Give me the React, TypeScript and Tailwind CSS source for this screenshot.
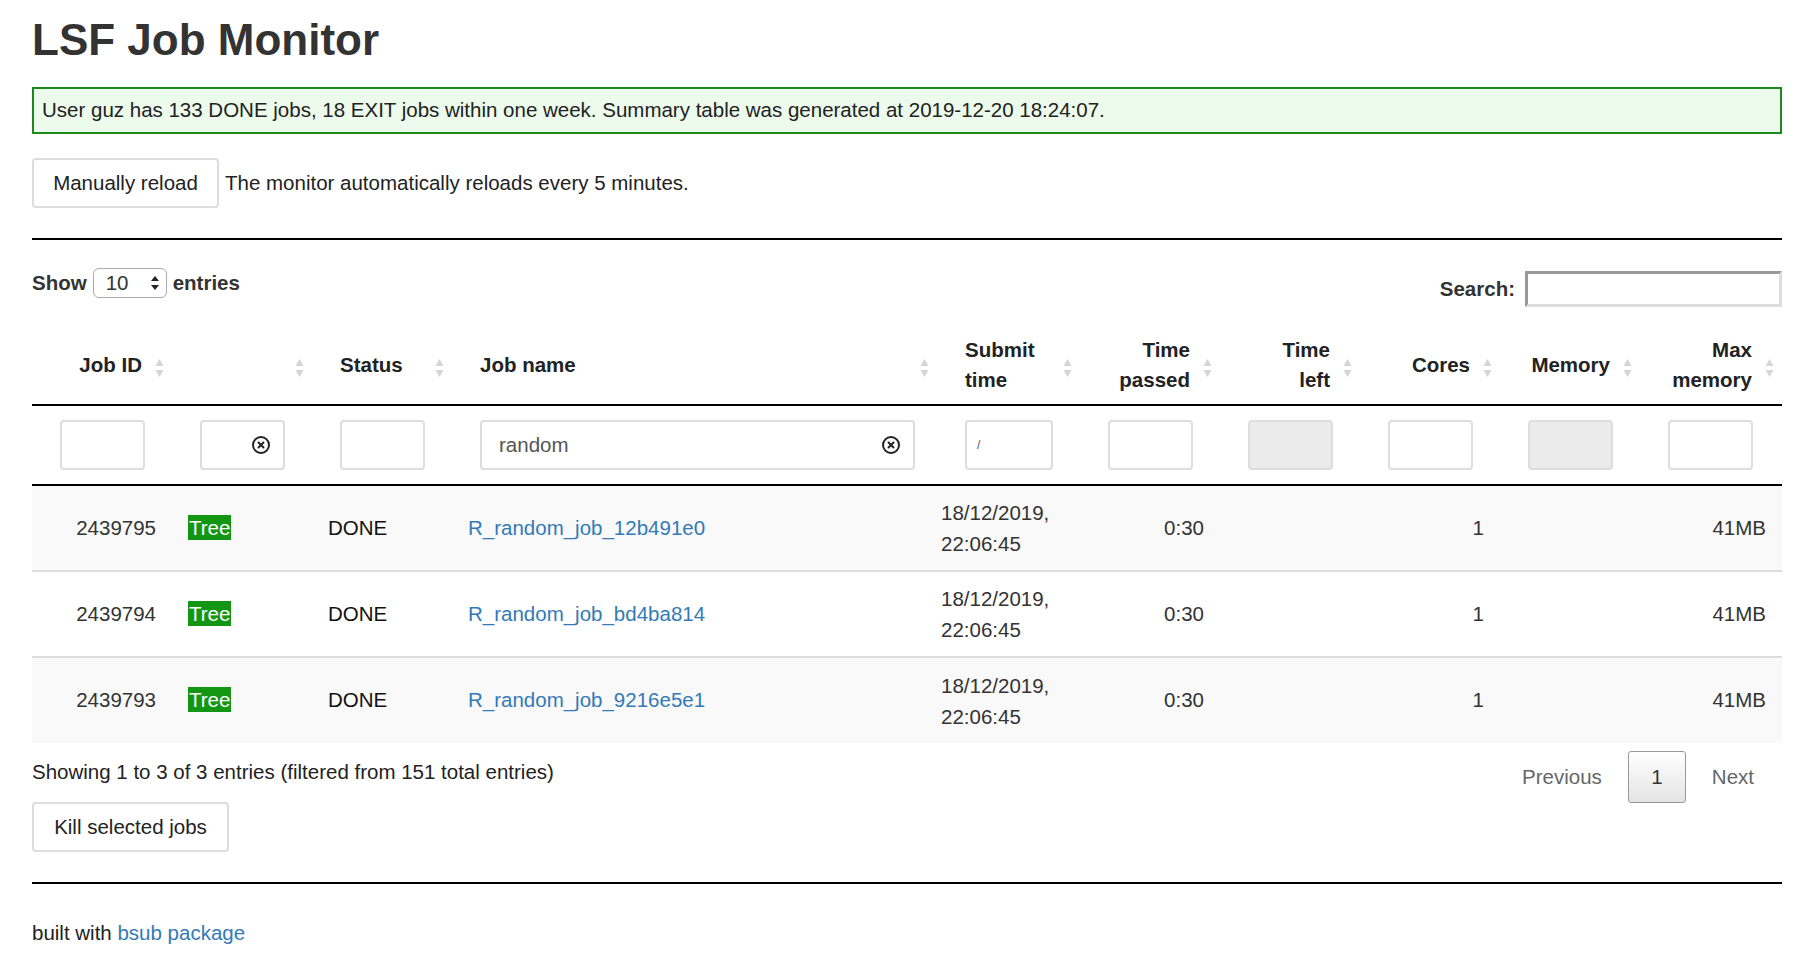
import React from "react";

const cols = [
  { label: ["Job ID"], w: 140, align: "right" },
  { label: [""], w: 140, align: "left" },
  { label: ["Status"], w: 140, align: "left" },
  { label: ["Job name"], w: 485, align: "left" },
  { label: ["Submit", "time"], w: 143, align: "left" },
  { label: ["Time", "passed"], w: 140, align: "right" },
  { label: ["Time", "left"], w: 140, align: "right" },
  { label: ["Cores"], w: 140, align: "right" },
  { label: ["Memory"], w: 140, align: "right" },
  { label: ["Max", "memory"], w: 142, align: "right" },
];

const rows = [
  ["2439795", "R_random_job_12b491e0"],
  ["2439794", "R_random_job_bd4ba814"],
  ["2439793", "R_random_job_9216e5e1"],
];

function Arrows() {
  return (
    <svg width="9" height="20" viewBox="0 0 9 20" className="absolute right-[8px] top-1/2 -translate-y-1/2">
      <path d="M4.5 1 L8.5 8 L0.5 8 Z" fill="#d6d6d6" />
      <path d="M4.5 19 L8.5 12 L0.5 12 Z" fill="#d6d6d6" />
    </svg>
  );
}

function ClearIcon() {
  return (
    <svg width="20" height="20" viewBox="0 0 20 20" className="absolute right-[12px] top-1/2 -translate-y-1/2">
      <circle cx="10" cy="10" r="8" fill="none" stroke="#222" strokeWidth="2" />
      <path d="M7 7 L13 13 M13 7 L7 13" stroke="#222" strokeWidth="2" />
    </svg>
  );
}

export default function App() {
  return (
    <div className="px-[32px] text-[20.5px] text-[#333] bg-white" style={{ fontFamily: '"Liberation Sans", Arial, sans-serif' }}>
      <h1 className="text-[44px] font-bold pt-[12px] h-[87px] leading-[56px] text-[#333]">LSF Job Monitor</h1>
      <div className="border-2 border-[#1a8a1a] bg-[#ecfbec] h-[47px] flex items-center px-[8px] text-[#222]">
        User guz has 133 DONE jobs, 18 EXIT jobs within one week. Summary table was generated at 2019-12-20 18:24:07.
      </div>
      <div className="flex items-center mt-[24px] gap-[6px]">
        <button className="h-[50px] w-[187px] border-2 border-[#ddd] rounded-[4px] bg-white text-[#222]">Manually reload</button>
        <span className="text-[#222]">The monitor automatically reloads every 5 minutes.</span>
      </div>
      <div className="h-[2px] bg-black mt-[30px]" />
      <div className="flex justify-between items-start mt-[31px] h-[60px]">
        <div className="flex items-center font-bold gap-[6px] mt-[-3px]">
          Show
          <span className="inline-flex items-center border border-[#aaa] rounded-[6px] h-[30px] w-[74px] pl-[12px] pr-[6px] justify-between font-normal bg-white">
            10
            <svg width="10" height="16" viewBox="0 0 10 16"><path d="M5 1 L9 6 L1 6 Z M5 15 L9 10 L1 10 Z" fill="#222" /></svg>
          </span>
          entries
        </div>
        <div className="flex items-center gap-[10px] font-bold">
          Search:
          <div className="w-[257px] h-[36px] border-[3px] border-[#ddd] border-t-[#999] border-l-[#999] bg-white" />
        </div>
      </div>
      <table className="border-collapse table-fixed w-full">
        <colgroup>
          {cols.map((c, i) => <col key={i} style={{ width: c.w }} />)}
        </colgroup>
        <thead>
          <tr className="h-[74px] border-b-2 border-black">
            {cols.map((c, i) => (
              <th key={i} className={`relative font-bold text-[#222] leading-[30px] align-top pt-[4px] ${c.label.length === 1 ? "pt-[19px]" : ""} ${c.align === "right" ? "text-right pr-[30px]" : "text-left pl-[28px]"}`}>
                {c.label.map((l, j) => <div key={j}>{l}</div>)}
                <Arrows />
              </th>
            ))}
          </tr>
          <tr className="h-[80px] border-b-2 border-black">
            {cols.map((c, i) => {
              const disabled = i === 6 || i === 8;
              const w = i === 3 ? "w-[435px]" : i === 4 ? "w-[88px]" : "w-[85px]";
              return (
                <th key={i} className="pl-[28px] text-left font-normal">
                  <div className={`relative h-[50px] ${w} border-2 border-[#ddd] rounded-[4px] ${disabled ? "bg-[#ebebeb]" : "bg-white"} flex items-center`}>
                    {i === 3 && <span className="pl-[17px] text-[#555]">random</span>}
                    {i === 4 && <span className="pl-[10px] text-[#555] text-[12px]">/</span>}
                    {(i === 1 || i === 3) && <ClearIcon />}
                  </div>
                </th>
              );
            })}
          </tr>
        </thead>
        <tbody>
          {rows.map((r, k) => (
            <tr key={k} className={`h-[86px] ${k < 2 ? "border-b-2 border-[#ddd]" : ""} ${k % 2 === 0 ? "bg-[#f9f9f9]" : "bg-white"}`}>
              <td className="text-right pr-[16px]">{r[0]}</td>
              <td className="pl-[16px]"><span className="bg-[#139613] text-white px-[1px] py-[1px]">Tree</span></td>
              <td className="pl-[16px] text-[#111]">DONE</td>
              <td className="pl-[16px] text-[#337ab7]">{r[1]}</td>
              <td className="pl-[4px] leading-[31px]">18/12/2019,<br />22:06:45</td>
              <td className="text-right pr-[16px]">0:30</td>
              <td></td>
              <td className="text-right pr-[16px]">1</td>
              <td></td>
              <td className="text-right pr-[16px]">41MB</td>
            </tr>
          ))}
        </tbody>
      </table>
      <div className="flex justify-between items-start mt-[8px]">
        <div className="flex flex-col items-start">
          <div className="h-[44px] mt-[-1px] flex items-center text-[#222]">Showing 1 to 3 of 3 entries (filtered from 151 total entries)</div>
          <button className="h-[50px] w-[197px] border-2 border-[#ddd] rounded-[4px] bg-white text-[#222] mt-[8px]">Kill selected jobs</button>
        </div>
        <div className="flex items-center text-[#666] mr-[10px]">
          <span className="px-[18px]">Previous</span>
          <span className="h-[52px] w-[58px] flex items-center justify-center border border-[#999] rounded-[3px] bg-gradient-to-b from-white to-[#e4e4e4] text-[#333] mx-[8px]">1</span>
          <span className="px-[18px]">Next</span>
        </div>
      </div>
      <div className="h-[2px] bg-black mt-[30px]" />
      <div className="mt-[34px] text-[#222]">built with <span className="text-[#337ab7]">bsub package</span></div>
    </div>
  );
}
